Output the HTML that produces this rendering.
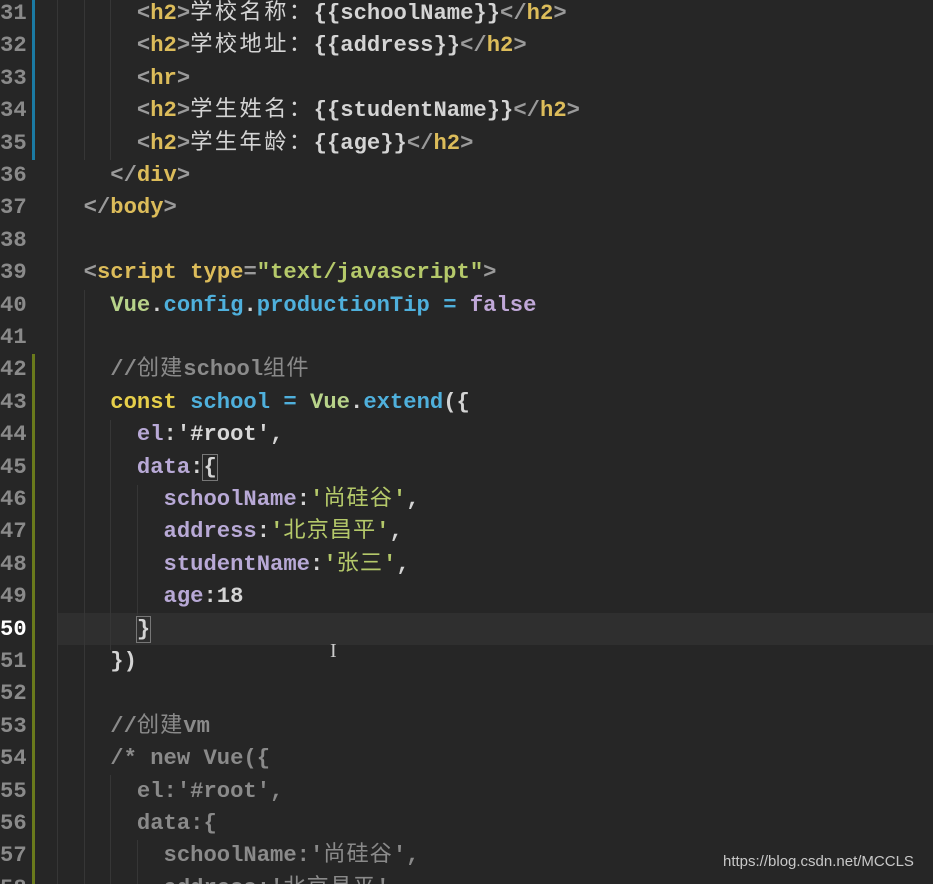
<!DOCTYPE html>
<html style="overflow:hidden"><head><meta charset="utf-8"><style>
html,body{margin:0;width:933px;height:884px;overflow:hidden}
body{background:#262626;position:relative;font-family:"Liberation Mono","Noto Sans CJK SC",monospace;font-weight:bold;font-size:22.2px}
.ln{position:absolute;left:0;width:26px;text-align:right;color:#8a8a8a;height:32.4px;line-height:32.4px;overflow:hidden}
.c{position:absolute;left:57px;white-space:pre;height:32.4px;line-height:32.4px;color:#d4d4d4;overflow:visible}
.z{font-family:"Noto Sans CJK SC",sans-serif;font-weight:normal;letter-spacing:2.5px;line-height:0;vertical-align:baseline}
.g{color:#9a9a9a}.t{color:#dcbc5a}.s{color:#b5c96a}.b{color:#4fb0dc}.v{color:#b8d38a}.p{color:#c0a8d8}.k{color:#e6cf4a}.cm{color:#8a8a8a}.a{color:#b8a9d6}.w{color:#d8d8d8}
.guide{position:absolute;width:1px;background:#363636}
</style></head><body>
<div style="position:absolute;left:57px;right:0;top:613px;height:32px;background:#2f2f2f"></div>
<div style="position:absolute;left:32px;top:0;width:3px;height:160px;background:#1b7aa3"></div>
<div style="position:absolute;left:32px;top:354px;width:3px;height:530px;background:#6a7a1c"></div>
<div class="guide" style="left:57px;top:0;height:884px"></div>
<div class="guide" style="left:84px;top:0;height:160px"></div>
<div class="guide" style="left:110px;top:0;height:160px"></div>
<div class="guide" style="left:84px;top:290px;height:594px"></div>
<div class="guide" style="left:110px;top:420px;height:230px"></div>
<div class="guide" style="left:137px;top:485px;height:130px"></div>
<div class="guide" style="left:110px;top:775px;height:109px"></div>
<div class="guide" style="left:137px;top:840px;height:44px"></div>

<div class="ln" style="top:-2px">31</div><div class="c" style="top:-2px">      <span class="g">&lt;</span><span class="t">h2</span><span class="g">&gt;</span><span class="z">学校名称：</span>{{schoolName}}<span class="g">&lt;/</span><span class="t">h2</span><span class="g">&gt;</span></div>
<div class="ln" style="top:30.4px">32</div><div class="c" style="top:30.4px">      <span class="g">&lt;</span><span class="t">h2</span><span class="g">&gt;</span><span class="z">学校地址：</span>{{address}}<span class="g">&lt;/</span><span class="t">h2</span><span class="g">&gt;</span></div>
<div class="ln" style="top:62.8px">33</div><div class="c" style="top:62.8px">      <span class="g">&lt;</span><span class="t">hr</span><span class="g">&gt;</span></div>
<div class="ln" style="top:95.2px">34</div><div class="c" style="top:95.2px">      <span class="g">&lt;</span><span class="t">h2</span><span class="g">&gt;</span><span class="z">学生姓名：</span>{{studentName}}<span class="g">&lt;/</span><span class="t">h2</span><span class="g">&gt;</span></div>
<div class="ln" style="top:127.6px">35</div><div class="c" style="top:127.6px">      <span class="g">&lt;</span><span class="t">h2</span><span class="g">&gt;</span><span class="z">学生年龄：</span>{{age}}<span class="g">&lt;/</span><span class="t">h2</span><span class="g">&gt;</span></div>
<div class="ln" style="top:160px">36</div><div class="c" style="top:160px">    <span class="g">&lt;/</span><span class="t">div</span><span class="g">&gt;</span></div>
<div class="ln" style="top:192.4px">37</div><div class="c" style="top:192.4px">  <span class="g">&lt;/</span><span class="t">body</span><span class="g">&gt;</span></div>
<div class="ln" style="top:224.8px">38</div>
<div class="ln" style="top:257.2px">39</div><div class="c" style="top:257.2px">  <span class="g">&lt;</span><span class="t">script</span> <span class="t">type</span><span class="g">=</span><span class="s">"text/javascript"</span><span class="g">&gt;</span></div>
<div class="ln" style="top:289.6px">40</div><div class="c" style="top:289.6px">    <span class="v">Vue</span>.<span class="b">config</span>.<span class="b">productionTip</span> <span class="b">=</span> <span class="p">false</span></div>
<div class="ln" style="top:322px">41</div>
<div class="ln" style="top:354.4px">42</div><div class="c cm" style="top:354.4px">    //<span class="z" style="letter-spacing:1px">创建</span>school<span class="z" style="letter-spacing:1px">组件</span></div>
<div class="ln" style="top:386.8px">43</div><div class="c" style="top:386.8px">    <span class="k">const</span> <span class="b">school</span> <span class="b">=</span> <span class="v">Vue</span>.<span class="b">extend</span>({</div>
<div class="ln" style="top:419.2px">44</div><div class="c" style="top:419.2px">      <span class="a">el</span>:<span class="w">'#root'</span>,</div>
<div class="ln" style="top:451.6px">45</div><div class="c" style="top:451.6px">      <span class="a">data</span>:<span style="outline:1px solid #777">{</span></div>
<div class="ln" style="top:484px">46</div><div class="c" style="top:484px">        <span class="a">schoolName</span>:<span class="s">'<span class="z" style="letter-spacing:1px">尚硅谷</span>'</span>,</div>
<div class="ln" style="top:516.4px">47</div><div class="c" style="top:516.4px">        <span class="a">address</span>:<span class="s">'<span class="z" style="letter-spacing:1px">北京昌平</span>'</span>,</div>
<div class="ln" style="top:548.8px">48</div><div class="c" style="top:548.8px">        <span class="a">studentName</span>:<span class="s">'<span class="z" style="letter-spacing:1px">张三</span>'</span>,</div>
<div class="ln" style="top:581.2px">49</div><div class="c" style="top:581.2px">        <span class="a">age</span>:18</div>
<div class="ln" style="top:613.6px;color:#fff">50</div><div class="c" style="top:613.6px">      <span style="outline:1px solid #777">}</span></div>
<div class="ln" style="top:646px">51</div><div class="c" style="top:646px">    })</div>
<div class="ln" style="top:678.4px">52</div>
<div class="ln" style="top:710.8px">53</div><div class="c cm" style="top:710.8px">    //<span class="z" style="letter-spacing:1px">创建</span>vm</div>
<div class="ln" style="top:743.2px">54</div><div class="c cm" style="top:743.2px">    /* new Vue({</div>
<div class="ln" style="top:775.6px">55</div><div class="c cm" style="top:775.6px">      el:'#root',</div>
<div class="ln" style="top:808px">56</div><div class="c cm" style="top:808px">      data:{</div>
<div class="ln" style="top:840.4px">57</div><div class="c cm" style="top:840.4px">        schoolName:'<span class="z" style="letter-spacing:1px">尚硅谷</span>',</div>
<div class="ln" style="top:872.8px">58</div><div class="c cm" style="top:872.8px">        address:'<span class="z" style="letter-spacing:1px">北京昌平</span>',</div>
<div style="position:absolute;left:330px;top:641px;color:#ccc;font-family:'Liberation Serif',serif;font-weight:normal;font-size:20px;line-height:20px">I</div>
<div style="position:absolute;left:721px;top:853px;color:#c8c8c8;font-family:'Liberation Sans',sans-serif;font-weight:normal;font-size:15px;line-height:18px;background:#262626;padding:0 2px">https://blog.csdn.net/MCCLS</div>
</body></html>
